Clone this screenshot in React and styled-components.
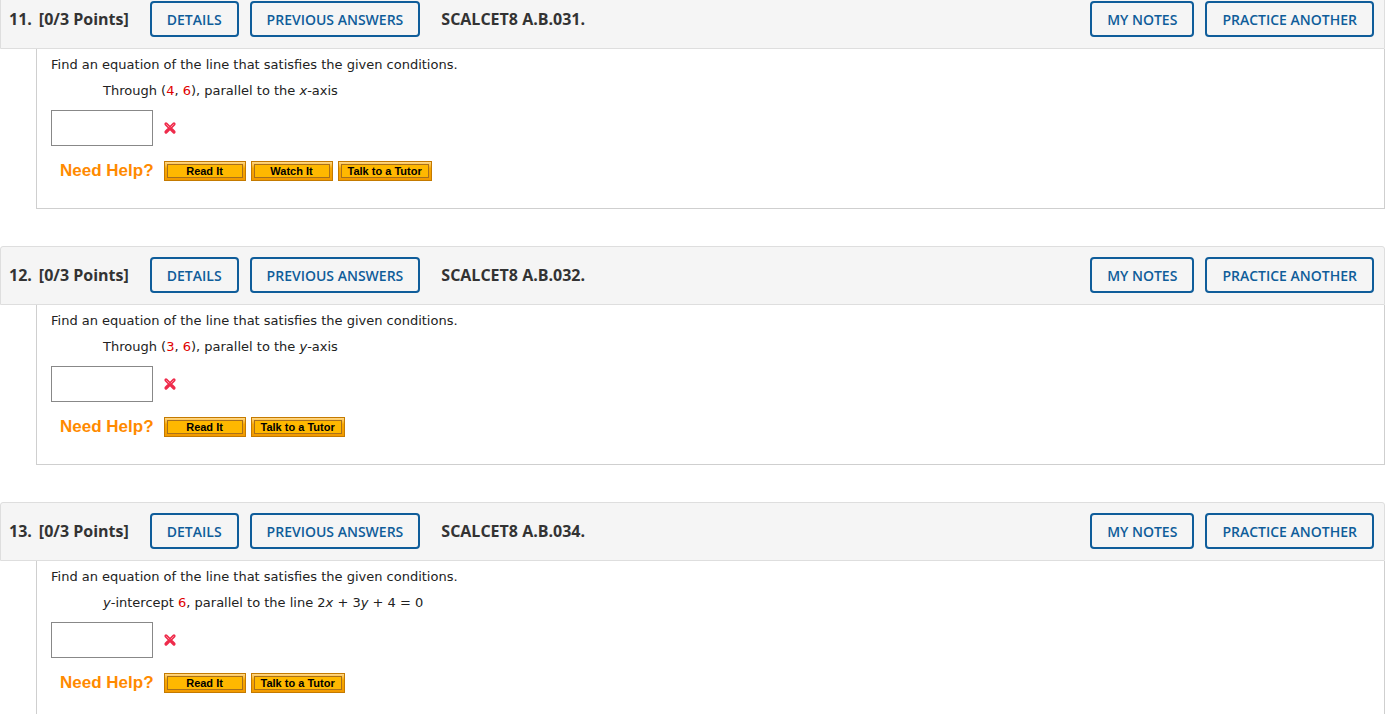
import React from "react";
import styled, { createGlobalStyle } from "styled-components";

const GlobalStyle = createGlobalStyle`
  body {
    margin: 0;
    background: #fff;
    font-family: "Open Sans", "Liberation Sans", sans-serif;
    color: #333;
  }
`;

const Page = styled.div`
  margin-top: -10px;
  padding-right: 3px;
  display: flex;
  flex-direction: column;
  gap: 37px;
`;

const Card = styled.div``;

const Header = styled.div`
  display: flex;
  align-items: center;
  padding: 10px 10px 11px 8px;
  background: #f5f5f5;
  border: 1px solid #dedede;
  border-radius: 3px 3px 0 0;
`;

const Number = styled.span`
  font-size: 16px;
  font-weight: 700;
  color: #333;
  margin-right: 7px;
`;

const Points = styled.span`
  font-size: 16px;
  font-weight: 700;
  color: #333;
  margin-right: 21px;
`;

const OutlineButton = styled.button`
  height: 36px;
  padding: 0 15px;
  margin-right: 11px;
  background: transparent;
  border: 2px solid #0f5d9a;
  border-radius: 4px;
  color: #0f5d9a;
  font-family: "Open Sans", "Liberation Sans", sans-serif;
  font-size: 14px;
  font-weight: 600;
  cursor: pointer;

  &:last-child {
    margin-right: 0;
  }
`;

const Code = styled.span`
  margin-left: 10px;
  font-size: 16px;
  font-weight: 700;
  color: #333;
`;

const Spacer = styled.div`
  flex: 1;
`;

const Body = styled.div`
  margin-left: 36px;
  padding: 7px 14px 27px;
  border: 1px solid #cfcfcf;
  border-top: none;
  font-family: "DejaVu Sans", Verdana, sans-serif;
  font-size: 13px;
  color: #222;
`;

const Prompt = styled.div`
  line-height: 18px;
  margin-bottom: 8px;
  padding-left: ${(p) => (p.$indent ? "52px" : "0")};
`;

const Red = styled.span`
  color: #e00000;
`;

const AnswerRow = styled.div`
  display: flex;
  align-items: center;
  gap: 10px;
  margin-top: 10px;
`;

const AnswerInput = styled.input`
  box-sizing: border-box;
  width: 102px;
  height: 36px;
  border: 1px solid #888;
  margin: 0;
`;

const HelpRow = styled.div`
  display: flex;
  align-items: center;
  margin-top: 15px;
  padding-left: 9px;
  gap: 5px;
`;

const NeedHelp = styled.span`
  font-family: "Liberation Sans", Arial, sans-serif;
  font-size: 17px;
  font-weight: 700;
  color: #ff8a00;
  margin-right: 5px;
`;

const HelpButton = styled.button`
  box-sizing: border-box;
  min-width: 82px;
  height: 20px;
  padding: 2px;
  margin: 0;
  border: 1px solid #c47a00;
  border-radius: 0;
  background: linear-gradient(#ffd88a 0, #f8a800 35%, #f29a00 100%);
  cursor: pointer;
  display: flex;

  span {
    flex: 1;
    display: block;
    border: 1px solid #a9701a;
    background: #ffb800;
    padding: 0 6px;
    font-family: "Liberation Sans", Arial, sans-serif;
    font-size: 11px;
    font-weight: 700;
    line-height: 12px;
    color: #000;
    white-space: nowrap;
  }
`;

const questions = [
  {
    number: 11,
    code: "SCALCET8 A.B.031.",
    prompt: (
      <>
        Through (<Red>4</Red>, <Red>6</Red>), parallel to the <i>x</i>-axis
      </>
    ),
    help: ["Read It", "Watch It", "Talk to a Tutor"],
  },
  {
    number: 12,
    code: "SCALCET8 A.B.032.",
    prompt: (
      <>
        Through (<Red>3</Red>, <Red>6</Red>), parallel to the <i>y</i>-axis
      </>
    ),
    help: ["Read It", "Talk to a Tutor"],
  },
  {
    number: 13,
    code: "SCALCET8 A.B.034.",
    prompt: (
      <>
        <i>y</i>-intercept <Red>6</Red>, parallel to the line 2<i>x</i> + 3<i>y</i> + 4 = 0
      </>
    ),
    help: ["Read It", "Talk to a Tutor"],
  },
];

function WrongMark() {
  return (
    <svg width="14" height="14" viewBox="0 0 14 14">
      <path
        d="M3 3 L11 11 M11 3 L3 11"
        stroke="#ee2b4b"
        strokeWidth="3.2"
        strokeLinecap="round"
      />
      <path
        d="M3.5 3.5 L6 6 M10.5 3.5 L8 6"
        stroke="#ff8a9c"
        strokeWidth="1"
        strokeLinecap="round"
      />
    </svg>
  );
}

const Question = ({ q }) => (
  <Card>
    <Header>
      <Number>{q.number}.</Number>
      <Points>[0/3 Points]</Points>
      <OutlineButton>DETAILS</OutlineButton>
      <OutlineButton>PREVIOUS ANSWERS</OutlineButton>
      <Code>{q.code}</Code>
      <Spacer />
      <OutlineButton>MY NOTES</OutlineButton>
      <OutlineButton>PRACTICE ANOTHER</OutlineButton>
    </Header>
    <Body>
      <Prompt>Find an equation of the line that satisfies the given conditions.</Prompt>
      <Prompt $indent>{q.prompt}</Prompt>
      <AnswerRow>
        <AnswerInput type="text" />
        <WrongMark />
      </AnswerRow>
      <HelpRow>
        <NeedHelp>Need Help?</NeedHelp>
        {q.help.map((h) => (
          <HelpButton key={h}>
            <span>{h}</span>
          </HelpButton>
        ))}
      </HelpRow>
    </Body>
  </Card>
);

export default function App() {
  return (
    <>
      <GlobalStyle />
      <Page>
        {questions.map((q) => (
          <Question key={q.number} q={q} />
        ))}
      </Page>
    </>
  );
}
